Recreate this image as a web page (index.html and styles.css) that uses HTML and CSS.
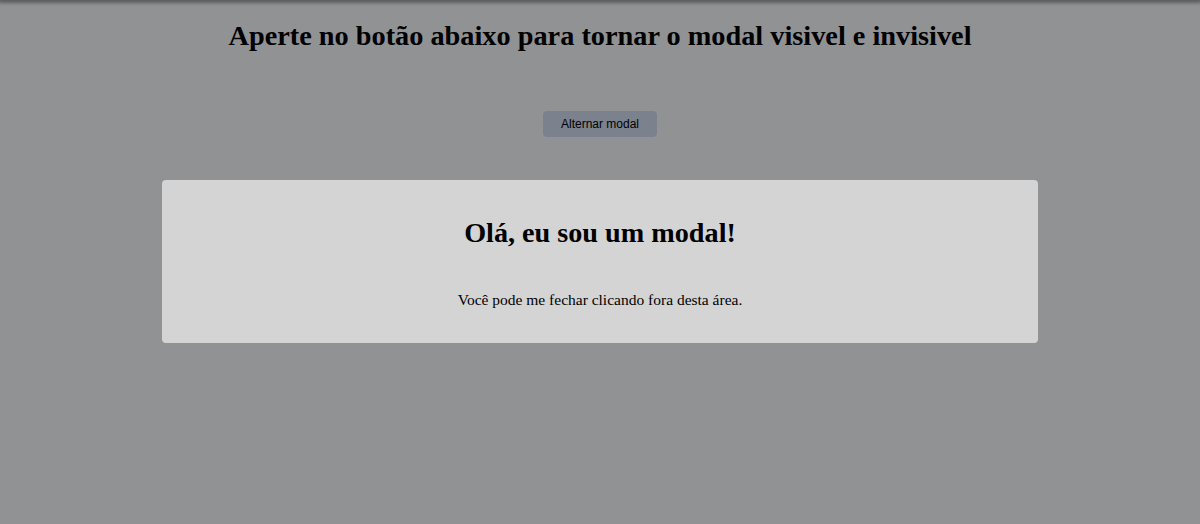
FILE: index.html
```html
<!DOCTYPE html>
<html lang="pt-BR">
<head>
<meta charset="utf-8">
<title>Modal</title>
<link rel="stylesheet" href="styles.css">
</head>
<body>
<div class="topshadow"></div>
<main class="page">
  <h1 class="title">Aperte no botão abaixo para tornar o modal visivel e invisivel</h1>
  <button class="toggle" type="button">Alternar modal</button>
  <section class="modal">
    <h2 class="modal-title">Olá, eu sou um modal!</h2>
    <p class="modal-text">Você pode me fechar clicando fora desta área.</p>
  </section>
</main>
</body>
</html>
```
FILE: styles.css
```css
html, body {
  margin: 0;
  padding: 0;
  height: 100%;
}
body {
  background: #919294;
  font-family: "Liberation Serif", "Times New Roman", serif;
  color: #000;
  overflow: hidden;
}
.topshadow {
  height: 0;
  box-shadow: 0 0 4px 2px rgba(0,0,0,0.55);
}
.page {
  display: flex;
  flex-direction: column;
  align-items: center;
}
.title {
  font-size: 28.3px;
  font-weight: bold;
  margin: 21px 0 0;
  line-height: 30px;
}
.toggle {
  margin-top: 60px;
  width: 114px;
  height: 26px;
  border: none;
  border-radius: 4px;
  background: #7b828e;
  font-family: "Liberation Sans", Arial, sans-serif;
  font-size: 12px;
  color: #000;
  padding: 0;
}
.modal {
  margin-top: 43px;
  width: 876px;
  height: 163px;
  box-sizing: border-box;
  background: #d4d4d4;
  border-radius: 4px;
  display: flex;
  flex-direction: column;
  align-items: center;
}
.modal-title {
  font-size: 28.2px;
  font-weight: bold;
  margin: 38px 0 0;
  line-height: 30px;
}
.modal-text {
  font-size: 15.5px;
  margin: 43px 0 0;
  line-height: 18px;
}
```
